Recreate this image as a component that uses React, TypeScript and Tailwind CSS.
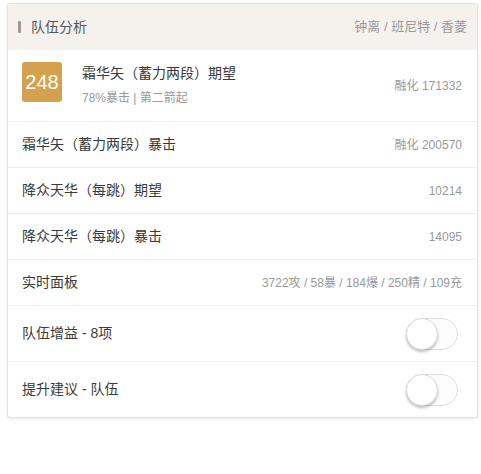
import React from "react";

const font = { fontFamily: '"Liberation Sans", "Noto Sans CJK SC", sans-serif' };

function Toggle() {
  return (
    <div className="relative w-[52px] h-[32px] rounded-full border border-[#dfdfdf] bg-[#fdfdfd]">
      <div className="absolute left-[-1px] top-[-1px] w-[32px] h-[32px] rounded-full bg-white border border-[#dcdcdc] shadow-[0_2px_3px_rgba(0,0,0,0.25)]" />
    </div>
  );
}

function Row({ label, value }: { label: string; value: string }) {
  return (
    <div className="flex items-center justify-between h-[46px] border-t border-[#eeeeee] pl-[14px] pr-[15px]">
      <span className="text-[14px] text-[#3a3a3a]">{label}</span>
      <span className="text-[12px] text-[#999]">{value}</span>
    </div>
  );
}

function ToggleRow({ label }: { label: string }) {
  return (
    <div className="flex items-center justify-between h-[56px] border-t border-[#eeeeee] pl-[14px] pr-[19px]">
      <span className="text-[14px] text-[#3a3a3a]">{label}</span>
      <Toggle />
    </div>
  );
}

export default function App() {
  return (
    <div className="w-[481px] h-[474px] bg-white pt-[3px] px-[7px]" style={font}>
      <div className="w-[471px] border border-[#e2e2e2] rounded-[3px] shadow-[0_1px_3px_rgba(0,0,0,0.1)] overflow-hidden bg-white">
        <div className="flex items-center justify-between h-[46px] bg-[#f5f2ee] pl-[10px] pr-[10px]">
          <div className="flex items-center">
            <div className="w-[3px] h-[12px] rounded-[1px] bg-[#a8968c]" />
            <span className="ml-[10px] text-[14px] text-[#555]">队伍分析</span>
          </div>
          <span className="text-[13px] text-[#999]">钟离 / 班尼特 / 香菱</span>
        </div>
        <div className="flex items-start h-[71px] pt-[12px] pl-[14px] pr-[15px]">
          <div className="w-[40px] h-[40px] rounded-[3px] bg-[#d4a24e] text-white text-[20px] flex items-center justify-center">
            248
          </div>
          <div className="ml-[20px] flex-1 flex flex-col">
            <span className="text-[14px] text-[#3a3a3a] leading-[20px] mt-[1px]">霜华矢（蓄力两段）期望</span>
            <span className="text-[12px] text-[#999] leading-[16px] mt-[7px]">78%暴击 | 第二箭起</span>
          </div>
          <span className="self-center text-[12px] text-[#999] mt-[-12px]">融化 171332</span>
        </div>
        <Row label="霜华矢（蓄力两段）暴击" value="融化 200570" />
        <Row label="降众天华（每跳）期望" value="10214" />
        <Row label="降众天华（每跳）暴击" value="14095" />
        <Row label="实时面板" value="3722攻 / 58暴 / 184爆 / 250精 / 109充" />
        <ToggleRow label="队伍增益 - 8项" />
        <ToggleRow label="提升建议 - 队伍" />
      </div>
    </div>
  );
}
